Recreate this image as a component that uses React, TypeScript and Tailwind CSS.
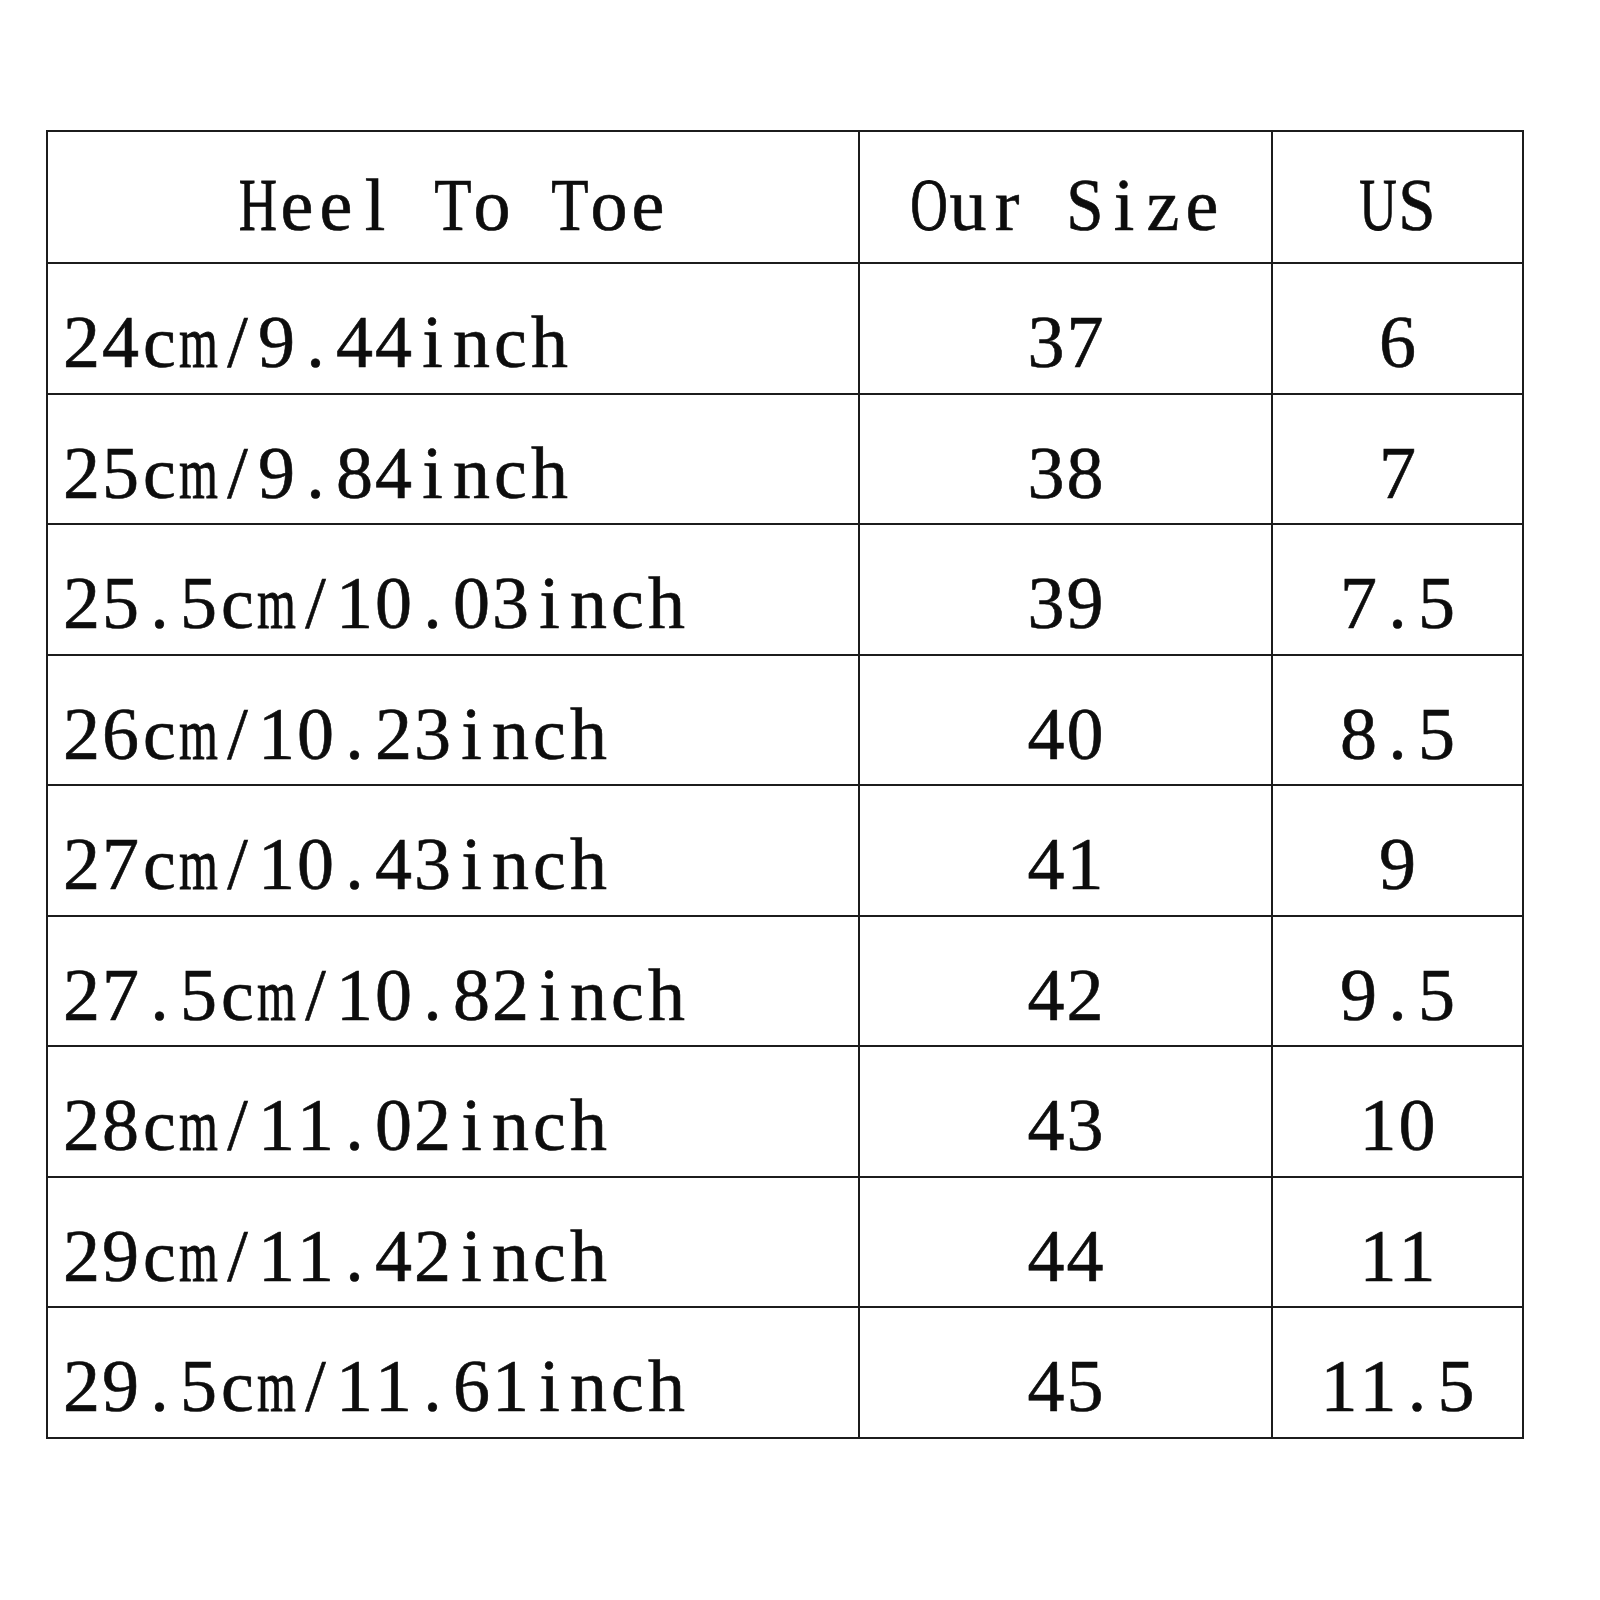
const rows: [string, string, string][] = [
  ['24cm/9.44inch', '37', '6'],
  ['25cm/9.84inch', '38', '7'],
  ['25.5cm/10.03inch', '39', '7.5'],
  ['26cm/10.23inch', '40', '8.5'],
  ['27cm/10.43inch', '41', '9'],
  ['27.5cm/10.82inch', '42', '9.5'],
  ['28cm/11.02inch', '43', '10'],
  ['29cm/11.42inch', '44', '11'],
  ['29.5cm/11.61inch', '45', '11.5'],
];

// half-width cells: wide serif glyphs are set smaller and stretched back up,
// so they fit the 39px cell like a CJK font's latin
const squeeze: Record<string, string> = {
  m: 'text-[50px] scale-y-[1.48]',
  H: 'text-[53px] scale-y-[1.4]',
  O: 'text-[52px] scale-y-[1.42]',
  U: 'text-[52px] scale-y-[1.42]',
  T: 'text-[61px] scale-y-[1.21]',
  S: 'text-[67px] scale-y-[1.1]',
};

function Txt({ children }: { children: string }) {
  return (
    <span className="whitespace-nowrap">
      {children.split('').map((ch, i) => (
        <span key={i} className="inline-block w-[39px] text-center">
          <span
            className={`inline-block whitespace-pre leading-none origin-[50%_0.8375em] ${squeeze[ch] ?? ''}`}
          >
            {ch === ' ' ? '\u00a0' : ch}
          </span>
        </span>
      ))}
    </span>
  );
}

export default function App() {
  const cell = 'border-2 border-[#1c1c1c] p-0 align-top';
  return (
    <div className="w-[1600px] h-[1600px] bg-white pt-[130px] pl-[46px] text-[#0d0d0d] font-['Liberation_Serif',serif] text-[74px] leading-none [-webkit-text-stroke:0.6px_#0d0d0d]">
      <table className="border-collapse table-fixed w-[1476px]">
        <colgroup>
          <col className="w-[812px]" />
          <col className="w-[413px]" />
          <col className="w-[251px]" />
        </colgroup>
        <thead>
          <tr className="h-[132px]">
            <th className={`${cell} text-center font-normal pt-[36px]`}>
              <Txt>Heel To Toe</Txt>
            </th>
            <th className={`${cell} text-center font-normal pt-[36px]`}>
              <Txt>Our Size</Txt>
            </th>
            <th className={`${cell} text-center font-normal pt-[36px]`}>
              <Txt>US</Txt>
            </th>
          </tr>
        </thead>
        <tbody>
          {rows.map((r) => (
            <tr key={r[0]} className="h-[130.5px]">
              <td className={`${cell} pl-[14px] pt-[41px]`}>
                <Txt>{r[0]}</Txt>
              </td>
              <td className={`${cell} text-center pt-[41px]`}>
                <Txt>{r[1]}</Txt>
              </td>
              <td className={`${cell} text-center pt-[41px]`}>
                <Txt>{r[2]}</Txt>
              </td>
            </tr>
          ))}
        </tbody>
      </table>
    </div>
  );
}
